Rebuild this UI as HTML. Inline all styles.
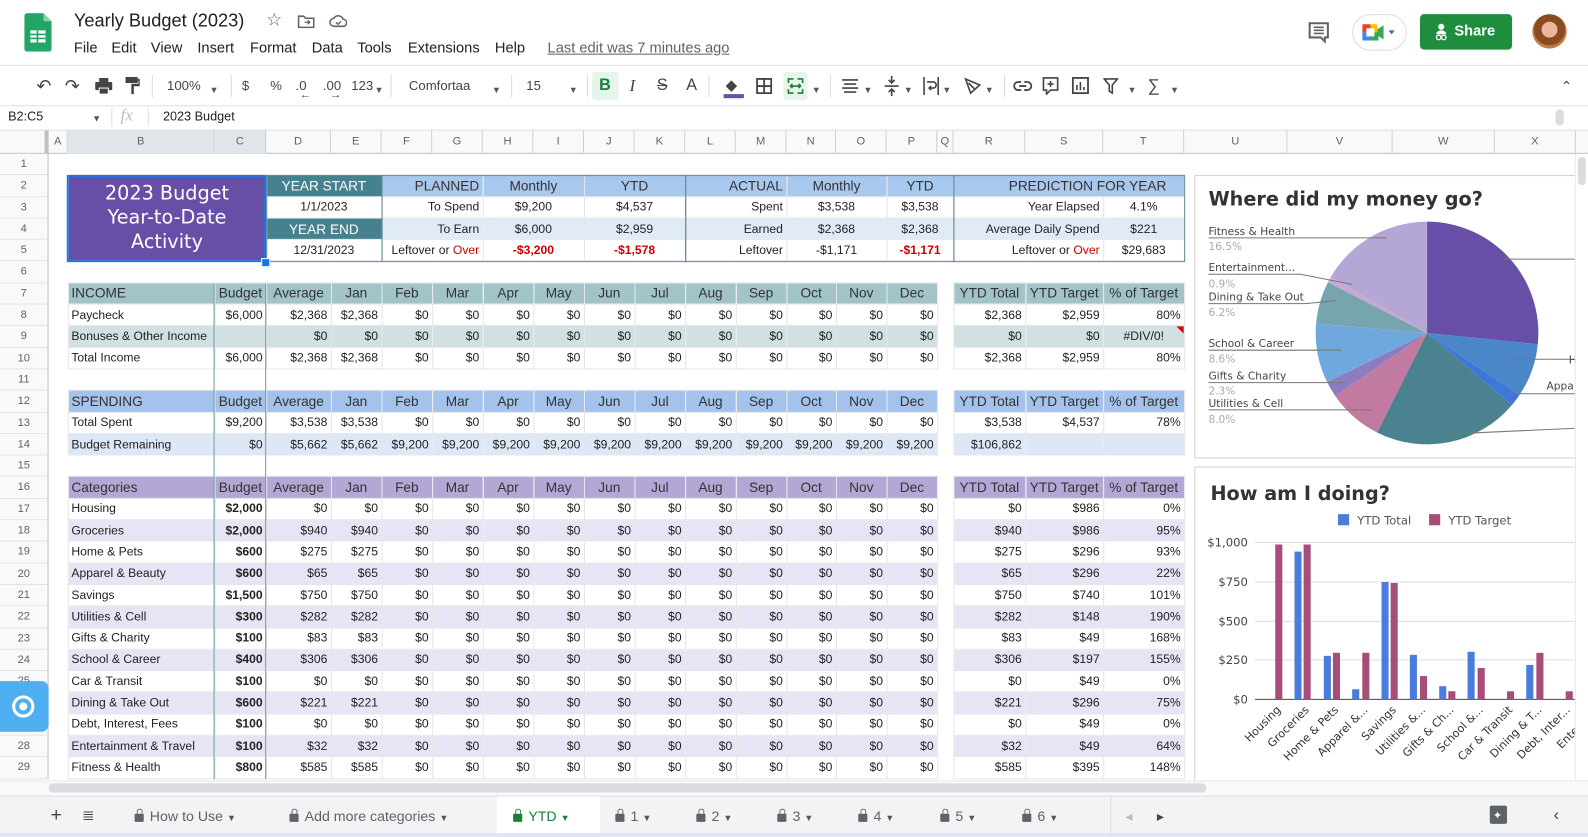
<!DOCTYPE html>
<html><head><meta charset="utf-8"><style>
html,body{margin:0;padding:0;width:1588px;height:837px;overflow:hidden;background:#fff;font-family:"Liberation Sans",Arial,sans-serif}
#w{position:absolute;left:0;top:0;width:1569px;height:827px;transform:scale(1.0121);transform-origin:0 0;overflow:hidden;background:#fff}
.a{position:absolute}
.tb{position:absolute;top:76px;font-size:13px;color:#444;line-height:18px}
.sep{position:absolute;top:74px;width:1px;height:22px;background:#dadce0}
.dd{font-size:9px;color:#555}
#rh{position:absolute;left:0;top:152px;width:48px}
#rh div{height:21.3px;line-height:21px;text-align:center;font-size:11px;color:#5f6368;border-bottom:1px solid #e2e3e3;box-sizing:border-box;background:#f8f9fa;border-right:1px solid #c0c0c0}
#ch{position:absolute;left:0;top:128px;height:24px;width:1569px;background:#f8f9fa;border-bottom:1px solid #c0c0c0;border-top:1px solid #e0e0e0;box-sizing:border-box}
#ch div{position:absolute;top:0;height:23px;line-height:23px;text-align:center;font-size:11px;color:#5f6368;border-right:1px solid #d0d0d0;box-sizing:border-box}
table{position:absolute;left:48px;top:152px;border-collapse:collapse;table-layout:fixed;width:1122px;font-size:12px;color:#222}
td{padding:0 3px;white-space:nowrap;overflow:hidden;text-align:right;height:20.3px;line-height:19px;border:1px solid transparent}
td.e{border:none}
.c td{border:1px solid #e4e6ea}
.c td.e{border:none}
td.l{text-align:left}
td.m{text-align:center}
.hd td{font-size:13.5px;text-align:center;color:#333}
.hd td.l{text-align:left}
.inc{background:#a2c4c9}
.inc2 td{background:#d0e0e3}
.spd{background:#a4c3ec}
.spd2 td{background:#dde8f6}
.cat{background:#b4a7d6}
.cat2 td{background:#e7e4f6}
.cr td:nth-child(3){font-weight:bold}
td.e{background:transparent!important}
.bh{background:#a9c8ee;font-size:13.5px;color:#333}
.teal{background:#45818e;color:#fff;text-align:center;font-size:13.5px}
.lb td{background:#e1ebf8}
.red{color:#cc0000}
.rb{color:#cc0000;font-weight:bold}
.title{background:#674ea7;color:#fff;text-align:center;line-height:24px;white-space:normal;font-family:"DejaVu Sans","Liberation Sans",sans-serif;font-size:19px}
.box{position:absolute;border:1px solid #5d8d99;box-sizing:border-box}
.tab{position:absolute;top:796px;font-size:14px;color:#5f6368;height:20px;line-height:20px;white-space:nowrap}
.lk{display:inline-block;width:9px;height:8px;background:#5f6368;border-radius:1px;position:relative;margin-right:6px;vertical-align:-1px}
.lk:before{content:"";position:absolute;left:1.5px;top:-5px;width:4px;height:5px;border:1.5px solid #5f6368;border-bottom:none;border-radius:3px 3px 0 0}
.lk.g{background:#188038}.lk.g:before{border-color:#188038}
</style></head><body><div id="w">

<svg class="a" style="left:24px;top:13px" width="27" height="38" viewBox="0 0 27 38"><path d="M0 3a3 3 0 0 1 3-3h16l8 8v27a3 3 0 0 1-3 3H3a3 3 0 0 1-3-3z" fill="#23a566"/><path d="M19 0v8h8z" fill="#8ed1b1"/><rect x="6" y="17" width="15" height="12" fill="#fff"/><path d="M6 21h15M6 25h15M13 17v12" stroke="#23a566" stroke-width="1.6"/></svg>
<div class="a" style="left:73px;top:10px;font-size:18px;color:#202124">Yearly Budget (2023)</div>
<div class="a" style="left:263px;top:9px;font-size:18px;color:#5f6368">☆</div>
<svg class="a" style="left:294px;top:14px" width="17" height="14"><path d="M1 2h5l2 2h8v9H1z" fill="none" stroke="#5f6368" stroke-width="1.5"/><path d="M7 8h5M10 6l2 2-2 2" stroke="#5f6368" fill="none" stroke-width="1.3"/></svg>
<svg class="a" style="left:325px;top:13px" width="18" height="15"><path d="M5 13a4 4 0 0 1 0-8 5 5 0 0 1 9 1 3.5 3.5 0 0 1 0 7z" fill="none" stroke="#5f6368" stroke-width="1.5"/><path d="M7 9l2 2 3-3" stroke="#5f6368" fill="none" stroke-width="1.3"/></svg>
<div class="a" style="left:73px;top:40px;font-size:14.5px;color:#202124">
<span class="a" style="left:0">File</span><span class="a" style="left:37px">Edit</span><span class="a" style="left:76px">View</span><span class="a" style="left:122px">Insert</span><span class="a" style="left:174px">Format</span><span class="a" style="left:235px">Data</span><span class="a" style="left:280px">Tools</span><span class="a" style="left:330px">Extensions</span><span class="a" style="left:416px">Help</span><span class="a" style="left:468px;color:#5f6368;text-decoration:underline;white-space:nowrap">Last edit was 7 minutes ago</span></div>
<svg class="a" style="left:1292px;top:21px" width="22" height="22"><path d="M2 2h18v14h-3v4l-4-4H2z" fill="none" stroke="#5f6368" stroke-width="2"/><path d="M6 6h10M6 9h10M6 12h10" stroke="#5f6368" stroke-width="1.6"/></svg>
<div class="a" style="left:1336px;top:14px;width:54px;height:36px;border-radius:18px;border:1px solid #dadce0;box-sizing:border-box"></div>
<svg class="a" style="left:1346px;top:22px" width="36" height="20"><rect x="0" y="2" width="15" height="16" rx="2" fill="#fbbc04"/><rect x="0" y="2" width="8" height="8" fill="#ea4335"/><rect x="0" y="10" width="8" height="8" fill="#4285f4"/><rect x="8" y="10" width="8" height="8" fill="#34a853"/><rect x="4" y="6" width="8" height="8" fill="#fff"/><path d="M15 7l6-4v14l-6-4z" fill="#34a853"/><path d="M26 8h6l-3 4z" fill="#1a73e8"/></svg>
<div class="a" style="left:1403px;top:14px;width:91px;height:35px;border-radius:4px;background:#1e8e3e;color:#fff;font-weight:bold;font-size:14.5px;line-height:35px"><svg class="a" style="left:14px;top:9px" width="14" height="18"><circle cx="7" cy="3.5" r="3" fill="#fff"/><path d="M2 11a5 4 0 0 1 10 0z" fill="#fff"/><circle cx="4.5" cy="14" r="2.2" fill="none" stroke="#fff" stroke-width="1.3"/><circle cx="9.5" cy="14" r="2.2" fill="none" stroke="#fff" stroke-width="1.3"/></svg><span class="a" style="left:34px">Share</span></div>
<div class="a" style="left:1514px;top:14px;width:34px;height:34px;border-radius:50%;background:radial-gradient(circle at 50% 45%,#e9b79a 0 30%,#8a4a22 32% 60%,#c57a45 62%)"></div>
<div class="a" style="left:0;top:64px;width:1569px;height:1px;background:#e0e0e0"></div>

<div class="tb" style="left:36px;font-size:18px">↶</div>
<div class="tb" style="left:64px;font-size:18px">↷</div>
<svg class="a" style="left:94px;top:77px" width="17" height="16"><rect x="4" y="0" width="9" height="4" fill="#444"/><rect x="0" y="4" width="17" height="8" rx="1" fill="#444"/><rect x="4" y="10" width="9" height="6" fill="#444" stroke="#fff" stroke-width="1"/></svg>
<svg class="a" style="left:124px;top:76px" width="14" height="18"><rect x="0" y="0" width="12" height="6" fill="#444"/><path d="M12 3h2v5H7v9" stroke="#444" stroke-width="2.5" fill="none"/></svg>
<div class="sep" style="left:150px"></div>
<div class="tb" style="left:165px">100%</div><div class="tb dd" style="left:207px;top:80px">▼</div>
<div class="sep" style="left:228px"></div>
<div class="tb" style="left:239px">$</div><div class="tb" style="left:267px">%</div>
<div class="tb" style="left:292px">.0</div><div class="tb" style="left:296px;top:85px;font-size:11px">←</div>
<div class="tb" style="left:319px">.00</div><div class="tb" style="left:326px;top:85px;font-size:11px">→</div>
<div class="tb" style="left:347px">123</div><div class="tb dd" style="left:370px;top:80px">▼</div>
<div class="sep" style="left:386px"></div>
<div class="tb" style="left:404px">Comfortaa</div><div class="tb dd" style="left:486px;top:80px">▼</div>
<div class="sep" style="left:505px"></div>
<div class="tb" style="left:520px">15</div><div class="tb dd" style="left:562px;top:80px">▼</div>
<div class="sep" style="left:580px"></div>
<div class="a" style="left:585px;top:71px;width:26px;height:28px;background:#e6f4ea;border-radius:3px"></div>
<div class="tb" style="left:592px;font-weight:bold;font-size:16px;color:#188038">B</div>
<div class="tb" style="left:622px;font-style:italic;font-size:17px;font-family:'Liberation Serif'">I</div>
<div class="tb" style="left:649px;font-size:16px;text-decoration:line-through">S</div>
<div class="tb" style="left:678px;font-size:16px">A</div>
<div class="sep" style="left:700px"></div>
<div class="tb" style="left:717px;font-size:15px">◆</div><div class="a" style="left:715px;top:93px;width:20px;height:4px;background:#674ea7"></div>
<svg class="a" style="left:747px;top:77px" width="16" height="16"><path d="M1 1h14v14H1zM8 1v14M1 8h14" fill="none" stroke="#444" stroke-width="1.8"/></svg>
<div class="a" style="left:774px;top:71px;width:24px;height:28px;background:#e6f4ea;border-radius:3px"></div>
<svg class="a" style="left:778px;top:77px" width="16" height="16"><path d="M1 5V1h5M10 1h5v4M15 11v4h-5M6 15H1v-4M3 8h10M5 6l-2 2 2 2M11 6l2 2-2 2" fill="none" stroke="#188038" stroke-width="1.6"/></svg>
<div class="tb dd" style="left:802px;top:80px">▼</div>
<div class="sep" style="left:820px"></div>
<svg class="a" style="left:832px;top:78px" width="16" height="14"><path d="M0 1h16M2 5h12M0 9h16M2 13h12" stroke="#444" stroke-width="1.6"/></svg><div class="tb dd" style="left:853px;top:80px">▼</div>
<svg class="a" style="left:874px;top:75px" width="14" height="20"><path d="M0 10h14M7 0v7M4 4l3 3 3-3M7 20v-7M4 16l3-3 3 3" fill="none" stroke="#444" stroke-width="1.6"/></svg><div class="tb dd" style="left:893px;top:80px">▼</div>
<svg class="a" style="left:912px;top:76px" width="16" height="18"><path d="M1 0v18M15 0v18M4 5h6a3 3 0 0 1 0 6H6M8 9l-2 2 2 2" fill="none" stroke="#444" stroke-width="1.6"/></svg><div class="tb dd" style="left:931px;top:80px">▼</div>
<svg class="a" style="left:952px;top:76px" width="18" height="18"><path d="M2 2l14 6-9 8zM5 6l6 6" fill="none" stroke="#444" stroke-width="1.6"/></svg><div class="tb dd" style="left:973px;top:80px">▼</div>
<div class="sep" style="left:992px"></div>
<svg class="a" style="left:1001px;top:79px" width="19" height="12"><path d="M8 2H5a4 4 0 0 0 0 8h3M11 2h3a4 4 0 0 1 0 8h-3M6 6h7" fill="none" stroke="#444" stroke-width="1.8"/></svg>
<svg class="a" style="left:1030px;top:76px" width="16" height="18"><path d="M1 1h14v12H8l-4 4v-4H1z" fill="none" stroke="#444" stroke-width="1.6"/><path d="M8 4v6M5 7h6" stroke="#444" stroke-width="1.6"/></svg>
<svg class="a" style="left:1059px;top:76px" width="17" height="17"><rect x="1" y="1" width="15" height="15" fill="none" stroke="#444" stroke-width="1.8"/><path d="M5 13V8M8.5 13V5M12 13v-3" stroke="#444" stroke-width="1.6"/></svg>
<svg class="a" style="left:1090px;top:77px" width="15" height="16"><path d="M1 1h13l-5 6v8l-3-2V7z" fill="none" stroke="#444" stroke-width="1.6"/></svg><div class="tb dd" style="left:1114px;top:80px">▼</div>
<div class="tb" style="left:1134px;font-size:17px">∑</div><div class="tb dd" style="left:1156px;top:80px">▼</div>
<div class="tb" style="left:1542px;font-size:14px">⌃</div>
<div class="a" style="left:0;top:104px;width:1569px;height:1px;background:#e0e0e0"></div>

<div class="a" style="left:8px;top:108px;font-size:12.5px;color:#222">B2:C5</div>
<div class="a dd" style="left:91px;top:112px">▼</div>
<div class="a" style="left:110px;top:107px;width:1px;height:18px;background:#dadce0"></div>
<div class="a" style="left:119px;top:104px;font-size:17px;font-style:italic;color:#bbb;font-family:'Liberation Serif'">fx</div>
<div class="a" style="left:146px;top:107px;width:1px;height:18px;background:#dadce0"></div>
<div class="a" style="left:161px;top:108px;font-size:12.5px;color:#222">2023 Budget</div>
<div class="a" style="left:1537px;top:108px;width:8px;height:16px;border-radius:4px;background:#dadce0"></div>

<div id="ch">
<div style="left:0;width:48px;border-right:4px solid #c0c0c0"></div>
<div style="left:48px;width:19px">A</div>
<div style="left:67px;width:145px;background:#e1e4e8">B</div>
<div style="left:212px;width:51px;background:#e1e4e8">C</div>
<div style="left:263px;width:64px">D</div><div style="left:327px;width:50px">E</div><div style="left:377px;width:50px">F</div><div style="left:427px;width:50px">G</div><div style="left:477px;width:50px">H</div><div style="left:527px;width:50px">I</div><div style="left:577px;width:50px">J</div><div style="left:627px;width:50px">K</div><div style="left:677px;width:50px">L</div><div style="left:727px;width:50px">M</div><div style="left:777px;width:49px">N</div><div style="left:826px;width:50px">O</div><div style="left:876px;width:50px">P</div><div style="left:926px;width:16px">Q</div><div style="left:942px;width:71px">R</div><div style="left:1013px;width:77px">S</div><div style="left:1090px;width:80px">T</div><div style="left:1170px;width:102px">U</div><div style="left:1272px;width:104px">V</div><div style="left:1376px;width:101px">W</div><div style="left:1477px;width:80px">X</div>
</div>

<div id="rh"><div>1</div><div>2</div><div>3</div><div>4</div><div>5</div><div>6</div><div>7</div><div>8</div><div>9</div><div>10</div><div>11</div><div>12</div><div>13</div><div>14</div><div>15</div><div>16</div><div>17</div><div>18</div><div>19</div><div>20</div><div>21</div><div>22</div><div>23</div><div>24</div><div>25</div><div>26</div><div>27</div><div>28</div><div>29</div></div>

<table>
<colgroup><col style="width:19px"><col style="width:145px"><col style="width:51px"><col style="width:64px"><col style="width:50px"><col style="width:50px"><col style="width:50px"><col style="width:50px"><col style="width:50px"><col style="width:50px"><col style="width:50px"><col style="width:50px"><col style="width:50px"><col style="width:49px"><col style="width:50px"><col style="width:50px"><col style="width:16px"><col style="width:71px"><col style="width:77px"><col style="width:80px"></colgroup>
<tr><td class="e" colspan="20"></td></tr>
<tr class="c"><td class="e"></td><td colspan="2" rowspan="4" class="title">2023 Budget<br>Year-to-Date<br>Activity</td><td colspan="2" class="teal">YEAR START</td><td colspan="2" class="bh">PLANNED</td><td colspan="2" class="bh m">Monthly</td><td colspan="2" class="bh m">YTD</td><td colspan="2" class="bh">ACTUAL</td><td colspan="2" class="bh m">Monthly</td><td colspan="2" class="bh m">YTD</td><td colspan="3" class="bh m" style="padding-left:40px">PREDICTION FOR YEAR</td></tr>
<tr class="c"><td class="e"></td><td colspan="2" class="m">1/1/2023</td><td colspan="2">To Spend</td><td colspan="2" class="m">$9,200</td><td colspan="2" class="m">$4,537</td><td colspan="2">Spent</td><td colspan="2" class="m">$3,538</td><td colspan="2" class="m">$3,538</td><td colspan="2">Year Elapsed</td><td class="m">4.1%</td></tr>
<tr class="c lb"><td class="e"></td><td colspan="2" class="teal" style="background:#45818e">YEAR END</td><td colspan="2">To Earn</td><td colspan="2" class="m">$6,000</td><td colspan="2" class="m">$2,959</td><td colspan="2">Earned</td><td colspan="2" class="m">$2,368</td><td colspan="2" class="m">$2,368</td><td colspan="2">Average Daily Spend</td><td class="m">$221</td></tr>
<tr class="c"><td class="e"></td><td colspan="2" class="m">12/31/2023</td><td colspan="2">Leftover or <span class="red">Over</span></td><td colspan="2" class="m rb">-$3,200</td><td colspan="2" class="m rb">-$1,578</td><td colspan="2">Leftover</td><td colspan="2" class="m">-$1,171</td><td colspan="2" class="m rb">-$1,171</td><td colspan="2">Leftover or <span class="red">Over</span></td><td class="m">$29,683</td></tr>
<tr><td class="e" colspan="20"></td></tr>
<tr class="c hd"><td class="e"></td><td class="l inc">INCOME</td><td class="inc">Budget</td><td class="inc">Average</td><td class="inc">Jan</td><td class="inc">Feb</td><td class="inc">Mar</td><td class="inc">Apr</td><td class="inc">May</td><td class="inc">Jun</td><td class="inc">Jul</td><td class="inc">Aug</td><td class="inc">Sep</td><td class="inc">Oct</td><td class="inc">Nov</td><td class="inc">Dec</td><td class="e"></td><td class="inc">YTD Total</td><td class="inc">YTD Target</td><td class="inc">% of Target</td></tr>
<tr class="c"><td class="e"></td><td class="l">Paycheck</td><td>$6,000</td><td>$2,368</td><td>$2,368</td><td>$0</td><td>$0</td><td>$0</td><td>$0</td><td>$0</td><td>$0</td><td>$0</td><td>$0</td><td>$0</td><td>$0</td><td>$0</td><td class="e"></td><td>$2,368</td><td>$2,959</td><td>80%</td></tr>
<tr class="c inc2"><td class="e"></td><td class="l">Bonuses &amp; Other Income</td><td></td><td>$0</td><td>$0</td><td>$0</td><td>$0</td><td>$0</td><td>$0</td><td>$0</td><td>$0</td><td>$0</td><td>$0</td><td>$0</td><td>$0</td><td>$0</td><td class="e"></td><td>$0</td><td>$0</td><td class="m" style="background:linear-gradient(225deg,#d00 5px,#d0e0e3 5px)">#DIV/0!</td></tr>
<tr class="c"><td class="e"></td><td class="l">Total Income</td><td>$6,000</td><td>$2,368</td><td>$2,368</td><td>$0</td><td>$0</td><td>$0</td><td>$0</td><td>$0</td><td>$0</td><td>$0</td><td>$0</td><td>$0</td><td>$0</td><td>$0</td><td class="e"></td><td>$2,368</td><td>$2,959</td><td>80%</td></tr>
<tr><td class="e" colspan="20"></td></tr>
<tr class="c hd"><td class="e"></td><td class="l spd">SPENDING</td><td class="spd">Budget</td><td class="spd">Average</td><td class="spd">Jan</td><td class="spd">Feb</td><td class="spd">Mar</td><td class="spd">Apr</td><td class="spd">May</td><td class="spd">Jun</td><td class="spd">Jul</td><td class="spd">Aug</td><td class="spd">Sep</td><td class="spd">Oct</td><td class="spd">Nov</td><td class="spd">Dec</td><td class="e"></td><td class="spd">YTD Total</td><td class="spd">YTD Target</td><td class="spd">% of Target</td></tr>
<tr class="c"><td class="e"></td><td class="l">Total Spent</td><td>$9,200</td><td>$3,538</td><td>$3,538</td><td>$0</td><td>$0</td><td>$0</td><td>$0</td><td>$0</td><td>$0</td><td>$0</td><td>$0</td><td>$0</td><td>$0</td><td>$0</td><td class="e"></td><td>$3,538</td><td>$4,537</td><td>78%</td></tr>
<tr class="c spd2"><td class="e"></td><td class="l">Budget Remaining</td><td>$0</td><td>$5,662</td><td>$5,662</td><td>$9,200</td><td>$9,200</td><td>$9,200</td><td>$9,200</td><td>$9,200</td><td>$9,200</td><td>$9,200</td><td>$9,200</td><td>$9,200</td><td>$9,200</td><td>$9,200</td><td class="e"></td><td>$106,862</td><td></td><td></td></tr>
<tr><td class="e" colspan="20"></td></tr>
<tr class="c hd"><td class="e"></td><td class="l cat">Categories</td><td class="cat">Budget</td><td class="cat">Average</td><td class="cat">Jan</td><td class="cat">Feb</td><td class="cat">Mar</td><td class="cat">Apr</td><td class="cat">May</td><td class="cat">Jun</td><td class="cat">Jul</td><td class="cat">Aug</td><td class="cat">Sep</td><td class="cat">Oct</td><td class="cat">Nov</td><td class="cat">Dec</td><td class="e"></td><td class="cat">YTD Total</td><td class="cat">YTD Target</td><td class="cat">% of Target</td></tr>
<tr class="c cr"><td class="e"></td><td class="l">Housing</td><td>$2,000</td><td>$0</td><td>$0</td><td>$0</td><td>$0</td><td>$0</td><td>$0</td><td>$0</td><td>$0</td><td>$0</td><td>$0</td><td>$0</td><td>$0</td><td>$0</td><td class="e"></td><td>$0</td><td>$986</td><td>0%</td></tr>
<tr class="c cr cat2"><td class="e"></td><td class="l">Groceries</td><td>$2,000</td><td>$940</td><td>$940</td><td>$0</td><td>$0</td><td>$0</td><td>$0</td><td>$0</td><td>$0</td><td>$0</td><td>$0</td><td>$0</td><td>$0</td><td>$0</td><td class="e"></td><td>$940</td><td>$986</td><td>95%</td></tr>
<tr class="c cr"><td class="e"></td><td class="l">Home &amp; Pets</td><td>$600</td><td>$275</td><td>$275</td><td>$0</td><td>$0</td><td>$0</td><td>$0</td><td>$0</td><td>$0</td><td>$0</td><td>$0</td><td>$0</td><td>$0</td><td>$0</td><td class="e"></td><td>$275</td><td>$296</td><td>93%</td></tr>
<tr class="c cr cat2"><td class="e"></td><td class="l">Apparel &amp; Beauty</td><td>$600</td><td>$65</td><td>$65</td><td>$0</td><td>$0</td><td>$0</td><td>$0</td><td>$0</td><td>$0</td><td>$0</td><td>$0</td><td>$0</td><td>$0</td><td>$0</td><td class="e"></td><td>$65</td><td>$296</td><td>22%</td></tr>
<tr class="c cr"><td class="e"></td><td class="l">Savings</td><td>$1,500</td><td>$750</td><td>$750</td><td>$0</td><td>$0</td><td>$0</td><td>$0</td><td>$0</td><td>$0</td><td>$0</td><td>$0</td><td>$0</td><td>$0</td><td>$0</td><td class="e"></td><td>$750</td><td>$740</td><td>101%</td></tr>
<tr class="c cr cat2"><td class="e"></td><td class="l">Utilities &amp; Cell</td><td>$300</td><td>$282</td><td>$282</td><td>$0</td><td>$0</td><td>$0</td><td>$0</td><td>$0</td><td>$0</td><td>$0</td><td>$0</td><td>$0</td><td>$0</td><td>$0</td><td class="e"></td><td>$282</td><td>$148</td><td>190%</td></tr>
<tr class="c cr"><td class="e"></td><td class="l">Gifts &amp; Charity</td><td>$100</td><td>$83</td><td>$83</td><td>$0</td><td>$0</td><td>$0</td><td>$0</td><td>$0</td><td>$0</td><td>$0</td><td>$0</td><td>$0</td><td>$0</td><td>$0</td><td class="e"></td><td>$83</td><td>$49</td><td>168%</td></tr>
<tr class="c cr cat2"><td class="e"></td><td class="l">School &amp; Career</td><td>$400</td><td>$306</td><td>$306</td><td>$0</td><td>$0</td><td>$0</td><td>$0</td><td>$0</td><td>$0</td><td>$0</td><td>$0</td><td>$0</td><td>$0</td><td>$0</td><td class="e"></td><td>$306</td><td>$197</td><td>155%</td></tr>
<tr class="c cr"><td class="e"></td><td class="l">Car &amp; Transit</td><td>$100</td><td>$0</td><td>$0</td><td>$0</td><td>$0</td><td>$0</td><td>$0</td><td>$0</td><td>$0</td><td>$0</td><td>$0</td><td>$0</td><td>$0</td><td>$0</td><td class="e"></td><td>$0</td><td>$49</td><td>0%</td></tr>
<tr class="c cr cat2"><td class="e"></td><td class="l">Dining &amp; Take Out</td><td>$600</td><td>$221</td><td>$221</td><td>$0</td><td>$0</td><td>$0</td><td>$0</td><td>$0</td><td>$0</td><td>$0</td><td>$0</td><td>$0</td><td>$0</td><td>$0</td><td class="e"></td><td>$221</td><td>$296</td><td>75%</td></tr>
<tr class="c cr"><td class="e"></td><td class="l">Debt, Interest, Fees</td><td>$100</td><td>$0</td><td>$0</td><td>$0</td><td>$0</td><td>$0</td><td>$0</td><td>$0</td><td>$0</td><td>$0</td><td>$0</td><td>$0</td><td>$0</td><td>$0</td><td class="e"></td><td>$0</td><td>$49</td><td>0%</td></tr>
<tr class="c cr cat2"><td class="e"></td><td class="l">Entertainment &amp; Travel</td><td>$100</td><td>$32</td><td>$32</td><td>$0</td><td>$0</td><td>$0</td><td>$0</td><td>$0</td><td>$0</td><td>$0</td><td>$0</td><td>$0</td><td>$0</td><td>$0</td><td class="e"></td><td>$32</td><td>$49</td><td>64%</td></tr>
<tr class="c cr"><td class="e"></td><td class="l">Fitness &amp; Health</td><td>$800</td><td>$585</td><td>$585</td><td>$0</td><td>$0</td><td>$0</td><td>$0</td><td>$0</td><td>$0</td><td>$0</td><td>$0</td><td>$0</td><td>$0</td><td>$0</td><td class="e"></td><td>$585</td><td>$395</td><td>148%</td></tr>
</table>

<div class="box" style="left:263px;top:173px;width:115px;height:86px"></div>
<div class="box" style="left:377px;top:173px;width:301px;height:86px"></div>
<div class="box" style="left:677px;top:173px;width:266px;height:86px"></div>
<div class="box" style="left:942px;top:173px;width:229px;height:86px"></div>
<div class="a" style="left:66px;top:173px;width:197px;height:86px;border:2px solid #1a73e8;box-sizing:border-box"></div>
<div class="a" style="left:258px;top:255px;width:7px;height:7px;background:#1a73e8;border:1px solid #fff"></div>
<div class="a" style="left:211px;top:280px;width:1px;height:490px;background:#6f9aa5"></div>
<div class="a" style="left:262px;top:280px;width:1px;height:490px;background:#6f9aa5"></div>

<div class="a" style="left:1180px;top:173px;width:400px;height:278px;border:1px solid #d0d0d0;background:#fff"></div>
<svg class="a" style="left:1180px;top:173px" width="389" height="278" viewBox="1180 173 389 278" font-family="DejaVu Sans,sans-serif">
<text x="1194" y="203" font-size="19" font-weight="bold" fill="#333">Where did my money go?</text>
<path d="M1410 329L1410 219A110 110 0 0 1 1519.4 340.1Z" fill="#674ea7"/>
<path d="M1410 329L1519.4 340.1A110 110 0 0 1 1501.3 390.3Z" fill="#4a86c8"/>
<path d="M1410 329L1501.3 390.3A110 110 0 0 1 1493.8 400.3Z" fill="#3c78d8"/>
<path d="M1410 329L1493.8 400.3A110 110 0 0 1 1360.6 427.3Z" fill="#4a838f"/>
<path d="M1410 329L1360.6 427.3A110 110 0 0 1 1319.3 391.3Z" fill="#c27ba0"/>
<path d="M1410 329L1319.3 391.3A110 110 0 0 1 1311.3 377.6Z" fill="#8e7cc3"/>
<path d="M1410 329L1311.3 377.6A110 110 0 0 1 1300.4 319.8Z" fill="#6fa8dc"/>
<path d="M1410 329L1300.4 319.8A110 110 0 0 1 1312.1 278.9Z" fill="#76a5af"/>
<path d="M1410 329L1312.1 278.9A110 110 0 0 1 1315 273.5Z" fill="#c9a9d4"/>
<path d="M1410 329L1315 273.5A110 110 0 0 1 1410 219Z" fill="#b4a7d6"/>
<g stroke="#777" stroke-width="1" fill="none">
<path d="M1194 235H1370"/><path d="M1194 271H1285L1336 281"/><path d="M1194 300H1290L1320 297"/><path d="M1194 346H1325"/><path d="M1194 378H1330"/><path d="M1194 405H1355"/>
<path d="M1485 256H1569"/><path d="M1492 355H1569"/><path d="M1488 389H1569"/><path d="M1428 429L1560 423"/>
</g>
<g font-size="10.5" fill="#444"><text x="1194" y="232">Fitness &amp; Health</text><text x="1194" y="268">Entertainment...</text><text x="1194" y="297">Dining &amp; Take Out</text><text x="1194" y="343">School &amp; Career</text><text x="1194" y="375">Gifts &amp; Charity</text><text x="1194" y="402">Utilities &amp; Cell</text><text x="1550" y="359">H</text><text x="1528" y="385">Appa</text></g>
<g font-size="10.5" fill="#aaa"><text x="1194" y="247">16.5%</text><text x="1194" y="284">0.9%</text><text x="1194" y="312">6.2%</text><text x="1194" y="358">8.6%</text><text x="1194" y="390">2.3%</text><text x="1194" y="418">8.0%</text></g>
</svg>

<div class="a" style="left:1180px;top:461px;width:400px;height:310px;border:1px solid #d0d0d0;background:#fff"></div>
<svg class="a" style="left:1180px;top:461px" width="389" height="310" viewBox="1180 461 389 310" font-family="DejaVu Sans,sans-serif">
<text x="1196" y="494" font-size="19" font-weight="bold" fill="#333">How am I doing?</text>
<rect x="1322" y="508" width="11" height="11" fill="#4a7ddb"/><text x="1341" y="518" font-size="11.5" fill="#555">YTD Total</text>
<rect x="1412" y="508" width="11" height="11" fill="#a64d79"/><text x="1431" y="518" font-size="11.5" fill="#555">YTD Target</text>
<g stroke="#ddd"><path d="M1240 536H1569M1240 575H1569M1240 614H1569M1240 652H1569"/></g><path d="M1240 691H1569" stroke="#444"/>
<g font-size="11.5" fill="#444" text-anchor="end"><text x="1233" y="540">$1,000</text><text x="1233" y="579">$750</text><text x="1233" y="618">$500</text><text x="1233" y="656">$250</text><text x="1233" y="695">$0</text></g>
<g fill="#4a7ddb"><rect x="1279" y="545" width="7" height="146"/><rect x="1308" y="648" width="7" height="43"/><rect x="1336" y="681" width="7" height="10"/><rect x="1365" y="575" width="7" height="116"/><rect x="1393" y="647" width="7" height="44"/><rect x="1422" y="678" width="7" height="13"/><rect x="1450" y="644" width="7" height="47"/><rect x="1508" y="657" width="7" height="34"/></g>
<g fill="#a64d79"><rect x="1260" y="538" width="7" height="153"/><rect x="1288" y="538" width="7" height="153"/><rect x="1317" y="645" width="7" height="46"/><rect x="1346" y="645" width="7" height="46"/><rect x="1374" y="576" width="7" height="115"/><rect x="1403" y="668" width="7" height="23"/><rect x="1431" y="683" width="7" height="8"/><rect x="1460" y="660" width="7" height="31"/><rect x="1489" y="683" width="7" height="8"/><rect x="1518" y="645" width="7" height="46"/><rect x="1547" y="683" width="7" height="8"/></g>
<g font-size="11" fill="#333" text-anchor="end">
<text transform="translate(1266,702) rotate(-45)">Housing</text><text transform="translate(1294,702) rotate(-45)">Groceries</text><text transform="translate(1323,702) rotate(-45)">Home &amp; Pets</text><text transform="translate(1352,702) rotate(-45)">Apparel &amp;...</text><text transform="translate(1380,702) rotate(-45)">Savings</text><text transform="translate(1409,702) rotate(-45)">Utilities &amp;...</text><text transform="translate(1437,702) rotate(-45)">Gifts &amp; Ch...</text><text transform="translate(1466,702) rotate(-45)">School &amp;...</text><text transform="translate(1495,702) rotate(-45)">Car &amp; Transit</text><text transform="translate(1524,702) rotate(-45)">Dining &amp; T...</text><text transform="translate(1552,702) rotate(-45)">Debt, Inter...</text><text transform="translate(1581,702) rotate(-45)">Entertai...</text>
</g>
</svg>

<div class="a" style="left:1556px;top:152px;width:13px;height:634px;background:#fff;border-left:1px solid #e8e8e8"></div>
<div class="a" style="left:1559px;top:155px;width:8px;height:28px;border-radius:4px;background:#dadce0"></div>
<div class="a" style="left:0;top:771px;width:1569px;height:15px;background:#f8f9fa;border-top:1px solid #e8e8e8"></div>
<div class="a" style="left:48px;top:774px;width:1144px;height:9px;border-radius:5px;background:#dadce0"></div>

<div class="a" style="left:0;top:673px;width:48px;height:50px;background:#4eaef0;border-radius:0 7px 7px 0"><div class="a" style="left:12px;top:14px;width:16px;height:16px;border:3px solid #fff;border-radius:50%"></div><div class="a" style="left:19px;top:21px;width:8px;height:8px;background:#fff;border-radius:50%"></div></div>

<div class="a" style="left:0;top:786px;width:1569px;height:37px;background:#f1f3f4;border-top:1px solid #e0e0e0"></div>
<div class="a" style="left:0;top:823px;width:1569px;height:4px;background:#e3e4f5"></div>
<div class="tab" style="left:50px;font-size:19px;color:#444">+</div>
<div class="tab" style="left:81px;font-size:15px;color:#444">≣</div>
<div class="a" style="left:491px;top:787px;width:102px;height:36px;background:#fff"></div>
<div class="tab" style="left:133px"><span class="lk"></span>How to Use <span class="dd">▼</span></div>
<div class="tab" style="left:286px"><span class="lk"></span>Add more categories <span class="dd">▼</span></div>
<div class="tab" style="left:507px;color:#188038"><span class="lk g"></span>YTD <span class="dd" style="color:#188038">▼</span></div>
<div class="tab" style="left:608px"><span class="lk"></span>1 <span class="dd">▼</span></div>
<div class="tab" style="left:688px"><span class="lk"></span>2 <span class="dd">▼</span></div>
<div class="tab" style="left:768px"><span class="lk"></span>3 <span class="dd">▼</span></div>
<div class="tab" style="left:848px"><span class="lk"></span>4 <span class="dd">▼</span></div>
<div class="tab" style="left:929px"><span class="lk"></span>5 <span class="dd">▼</span></div>
<div class="tab" style="left:1010px"><span class="lk"></span>6 <span class="dd">▼</span></div>
<div class="a" style="left:1097px;top:787px;width:1px;height:36px;background:#dadce0"></div>
<div class="tab" style="left:1112px;color:#bbb">◂</div><div class="tab" style="left:1143px;color:#444">▸</div>
<div class="a" style="left:1472px;top:796px;width:17px;height:18px;background:#5f6368;border-radius:2px"></div><div class="tab" style="left:1475px;color:#fff;font-size:11px">✦</div>
<div class="tab" style="left:1535px;color:#444;font-size:16px">‹</div>
</div></body></html>
